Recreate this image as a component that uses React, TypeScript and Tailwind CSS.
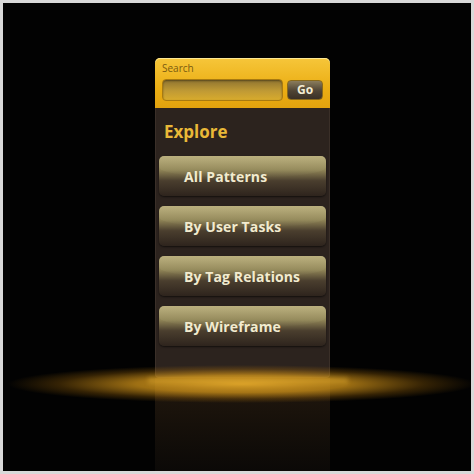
import React from "react";

const items = ["All Patterns", "By User Tasks", "By Tag Relations", "By Wireframe"];

function NavButton({ label }: { label: string }) {
  return (
    <div className="relative h-[40px] rounded-[5px] overflow-hidden bg-[linear-gradient(180deg,#b0a472_0%,#8f8456_35%,#4a3e2e_62%,#2e241d_100%)] shadow-[0_1px_2px_rgba(0,0,0,0.6)] flex items-center pl-[25px]">
      <div className="absolute inset-x-0 top-0 h-[22px] rounded-b-[50%] bg-[linear-gradient(180deg,rgba(255,250,200,0.15),rgba(255,255,255,0))]" />
      <span className="relative text-[14px] font-bold text-[#f2ebcf] tracking-[0.1px]">{label}</span>
    </div>
  );
}

export default function App() {
  return (
    <div className="w-[474px] h-[474px] bg-[#d9d9d9] p-[3px] font-['Open_Sans','DejaVu_Sans',sans-serif]">
      <div className="relative w-full h-full bg-[#020202] overflow-hidden flex flex-col items-center pt-[55px]">
        {/* panel */}
        <div className="relative z-10 w-[175px] ml-[11px] flex flex-col">
          <div className="h-[50px] rounded-t-[5px] bg-[linear-gradient(180deg,#f6c63a_0%,#ebae14_60%,#e2a20e_100%)] px-[7px] pt-[4px] shadow-[inset_0_1px_0_rgba(255,240,170,0.8)]">
            <div className="text-[10px] leading-[13px] text-[#7a5a10]">Search</div>
            <div className="mt-[4px] flex items-center gap-[4px]">
              <div className="w-[121px] h-[22px] rounded-[4px] border border-[#a87a10] bg-[linear-gradient(180deg,#8f7430_0%,#c09a35_55%,#d8ab2c_100%)] shadow-[inset_0_1px_2px_rgba(0,0,0,0.4)]" />
              <div className="w-[36px] h-[20px] rounded-[4px] bg-[linear-gradient(180deg,#8a7c5c_0%,#4f4434_55%,#3a3026_100%)] border border-[#8a6a1a] flex items-center justify-center text-[12px] font-bold text-[#f3ecd4]">
                Go
              </div>
            </div>
          </div>
          <div className="h-[270px] rounded-b-[4px] bg-[#2c231e] border-x border-b border-[#3a2f28] px-[3px] pt-[12px]">
            <div className="pl-[5px] text-[17px] font-bold text-[#e9b838] leading-[24px]">Explore</div>
            <div className="mt-[12px] flex flex-col gap-[10px]">
              {items.map((t) => (
                <NavButton key={t} label={t} />
              ))}
            </div>
          </div>
        </div>
        {/* reflection */}
        <div className="w-[175px] ml-[11px] h-[95px] bg-[linear-gradient(180deg,#22180e_0%,#16100a_50%,#0b0907_100%)]" />
        {/* glow */}
        <div className="absolute left-[0px] right-[0px] top-[362px] h-[38px] z-20 pointer-events-none bg-[radial-gradient(ellipse_50%_50%_at_51%_50%,rgba(225,165,40,0.95)_0%,rgba(210,148,25,0.75)_45%,rgba(170,110,10,0.3)_78%,rgba(150,100,10,0)_100%)]" />
        <div className="absolute left-[145px] w-[200px] top-[373px] h-[9px] z-20 pointer-events-none bg-[linear-gradient(180deg,rgba(240,185,55,0)_0%,rgba(240,185,55,0.45)_50%,rgba(240,185,55,0)_100%)] blur-[2px]" />
      </div>
    </div>
  );
}
